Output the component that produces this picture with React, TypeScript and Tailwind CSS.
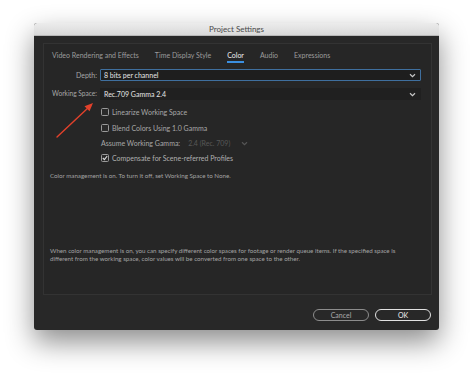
import React from "react";

const font = { fontFamily: "Lato, 'Open Sans', sans-serif" };

function Chevron({ dim = false }: { dim?: boolean }) {
  return (
    <svg width="7" height="5" viewBox="0 0 7 5" className="shrink-0">
      <path d="M1 1.2 L3.5 3.6 L6 1.2" fill="none" stroke={dim ? "#555" : "#c8c8c8"} strokeWidth="1.2" />
    </svg>
  );
}

function Box({ checked = false }: { checked?: boolean }) {
  return (
    <div className="w-[8px] h-[8px] rounded-[1.5px] border border-[#9a9a9a] flex items-center justify-center bg-[#2a2a2a] shrink-0">
      {checked && (
        <svg width="6" height="6" viewBox="0 0 6 6">
          <path d="M0.8 3 L2.4 4.6 L5.2 1" fill="none" stroke="#dcdcdc" strokeWidth="1.1" />
        </svg>
      )}
    </div>
  );
}

export default function App() {
  return (
    <div className="w-[474px] h-[376px] bg-white relative overflow-hidden" style={font}>
      <div className="pt-[23px] pl-[34px]">
        <div className="w-[405px] h-[307px] flex flex-col rounded-[3px] overflow-hidden shadow-[0_12px_28px_rgba(0,0,0,0.45)] bg-[#282828]">
          <div className="h-[13px] bg-gradient-to-b from-[#ececec] to-[#d9d9d9] border-b border-[#b8b8b8] flex items-center justify-center text-[8px] text-[#4a4a4a] leading-none">
            Project Settings
          </div>
          <div className="flex-1 flex flex-col pt-[7px] pl-[9px] pr-[7px]">
            <div className="h-[252px] border border-[#333333] bg-[#262626] flex flex-col px-[6px] pt-[7px]">
              <div className="flex items-end gap-[16px] pl-[2px] text-[7px] leading-[9px] text-[#9c9c9c]">
                <div className="pb-[1px] border-b-2 border-transparent">Video Rendering and Effects</div>
                <div className="pb-[1px] border-b-2 border-transparent">Time Display Style</div>
                <div className="pb-[1px] border-b-2 border-[#3b8fe0] text-[#eeeeee]">Color</div>
                <div className="pb-[1px] border-b-2 border-transparent">Audio</div>
                <div className="pb-[1px] border-b-2 border-transparent">Expressions</div>
              </div>
              <div className="flex items-center mt-[6px] pr-[4px] text-[7px]">
                <div className="w-[47px] flex justify-end whitespace-nowrap text-[#a6a6a6]">Depth:</div>
                <div className="ml-[3px] flex-1 h-[12px] border border-[#3f6f9e] bg-[#1e1e1e] rounded-[1px] flex items-center justify-between pl-[3px] pr-[4px] text-[#e6e6e6]">
                  <span>8 bits per channel</span>
                  <Chevron />
                </div>
              </div>
              <div className="flex items-center mt-[7px] pr-[4px] text-[7px]">
                <div className="w-[47px] flex justify-end whitespace-nowrap text-[6.6px] text-[#a6a6a6]">Working Space:</div>
                <div className="ml-[3px] flex-1 h-[12px] bg-[#202020] flex items-center justify-between pl-[4px] pr-[5px] text-[#e6e6e6]">
                  <span>Rec.709 Gamma 2.4</span>
                  <Chevron />
                </div>
              </div>
              <div className="ml-[51px] mt-[7px] h-[10px] flex items-center gap-[3px] text-[7px] text-[#a8a8a8]">
                <Box />
                <span>Linearize Working Space</span>
              </div>
              <div className="ml-[51px] mt-[6px] h-[10px] flex items-center gap-[3px] text-[7px] text-[#a8a8a8]">
                <Box />
                <span>Blend Colors Using 1.0 Gamma</span>
              </div>
              <div className="ml-[51px] mt-[5px] h-[10px] flex items-center text-[7px] text-[#a8a8a8]">
                <span>Assume Working Gamma:</span>
                <span className="ml-[8px] text-[#585858]">2.4 (Rec. 709)</span>
                <span className="ml-[11px]"><Chevron dim /></span>
              </div>
              <div className="ml-[51px] mt-[5px] h-[10px] flex items-center gap-[3px] text-[7px] text-[#b0b0b0]">
                <Box checked />
                <span>Compensate for Scene-referred Profiles</span>
              </div>
              <div className="mt-[8px] text-[6.2px] leading-[9px] text-[#a4a4a4]">
                Color management is on. To turn it off, set Working Space to None.
              </div>
              <div className="mt-auto pb-[31px] text-[6.2px] leading-[8px] text-[#a4a4a4]">
                When color management is on, you can specify different color spaces for footage or render queue items. If the specified space is
                <br />
                different from the working space, color values will be converted from one space to the other.
              </div>
            </div>
            <div className="flex justify-end gap-[6px] pt-[14px] pr-[1px]">
              <div className="w-[56px] h-[12px] rounded-full border border-[#8c8c8c] flex items-center justify-center text-[7px] text-[#a8a8a8]">
                Cancel
              </div>
              <div className="w-[56px] h-[12px] rounded-full border border-[#e2e2e2] flex items-center justify-center text-[7px] text-[#f2f2f2]">
                OK
              </div>
            </div>
          </div>
        </div>
      </div>
      <svg className="absolute left-0 top-0 pointer-events-none" width="474" height="376">
        <line x1="57" y1="137" x2="89" y2="107" stroke="#e2412b" strokeWidth="1.4" strokeLinecap="round" />
        <path d="M93 103 L84.5 106.2 L89.5 111.2 Z" fill="#e2412b" />
      </svg>
    </div>
  );
}
